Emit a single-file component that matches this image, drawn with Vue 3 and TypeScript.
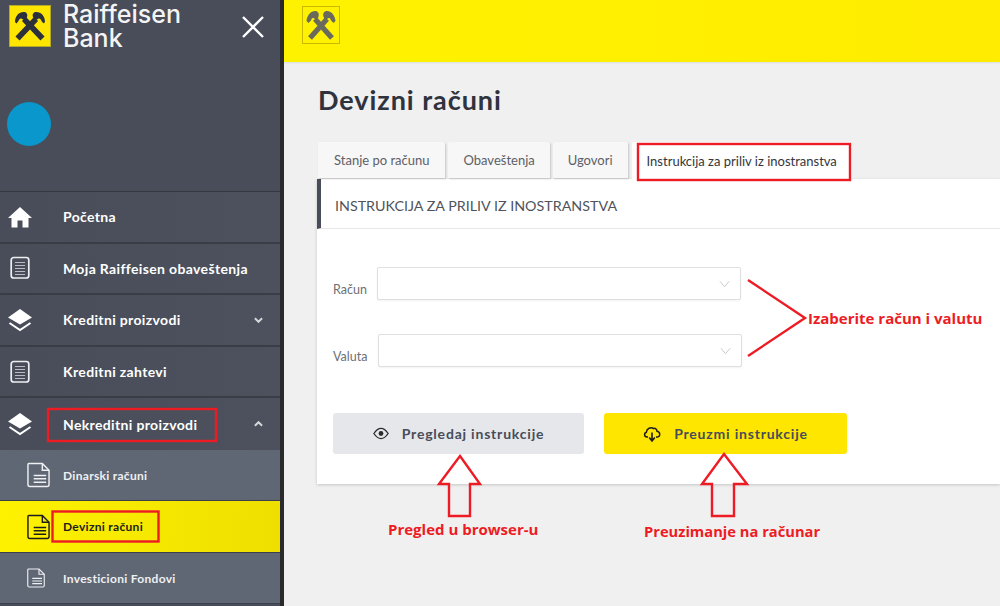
<script setup lang="ts">
type NavIcon = 'home' | 'list' | 'layers'

const mainItems: { label: string; icon: NavIcon; caret?: 'down' }[] = [
  { label: 'Početna', icon: 'home' },
  { label: 'Moja Raiffeisen obaveštenja', icon: 'list' },
  { label: 'Kreditni proizvodi', icon: 'layers', caret: 'down' },
  { label: 'Kreditni zahtevi', icon: 'list' },
]

const subItems = [
  { label: 'Dinarski računi', active: false, small: false },
  { label: 'Devizni računi', active: true, small: false },
  { label: 'Investicioni Fondovi', active: false, small: true },
]

const tabs = ['Stanje po računu', 'Obaveštenja', 'Ugovori']
</script>

<template>
  <div class="page">
    <aside class="sidebar">
      <div class="brand">
        <svg class="logo" viewBox="0 0 42 42">
          <rect x="0.5" y="0.5" width="41" height="41" fill="#ffe600" stroke="#b5a92a" />
          <path d="M8.5 33.5 L27 14 M33.5 33.5 L15 14" stroke="#2b303b" stroke-width="5.6" fill="none" />
          <path d="M6 17 C6 11 10 7 14.5 7 C17.5 7 19 9 18 12 L16 16 L12.5 13.5 C11 13 10 14.5 9.5 16 L7.5 18.5 Z" fill="#2b303b" />
          <path d="M36 17 C36 11 32 7 27.5 7 C24.5 7 23 9 24 12 L26 16 L29.5 13.5 C31 13 32 14.5 32.5 16 L34.5 18.5 Z" fill="#2b303b" />
        </svg>
        <div class="brand-name">Raiffeisen<br />Bank</div>
        <svg class="close" viewBox="0 0 24 24">
          <path d="M2 2 L22 22 M22 2 L2 22" stroke="#fff" stroke-width="2.4" fill="none" />
        </svg>
      </div>

      <div class="user"><span class="avatar"></span></div>

      <nav class="nav">
        <a v-for="item in mainItems" :key="item.label" class="row">
          <span class="icon-cell">
            <svg v-if="item.icon === 'home'" class="ico" viewBox="0 0 24 22">
              <path d="M12 1 L24 12 H20.5 V21.5 H14.5 V14.5 H9.5 V21.5 H3.5 V12 H0 Z" fill="#fff" />
            </svg>
            <svg v-else-if="item.icon === 'list'" class="ico" viewBox="0 0 24 24">
              <rect x="3.2" y="1.5" width="17.6" height="20.5" rx="2.5" fill="none" stroke="#eceef0" stroke-width="1.7" />
              <path d="M7 6.5 H17 M7 9.5 H17 M7 12.5 H17 M7 15.5 H17 M7 18.5 H17" stroke="#b9bcc2" stroke-width="1.1" />
            </svg>
            <svg v-else class="ico" viewBox="0 0 24 24">
              <path d="M12 1 L24 9.5 L12 16.5 L0 9.5 Z" fill="#fff" />
              <path d="M1.5 15 L12 22 L22.5 15" fill="none" stroke="#fff" stroke-width="2" />
            </svg>
          </span>
          <span class="label">{{ item.label }}</span>
          <svg v-if="item.caret" class="caret" viewBox="0 0 10 6">
            <path d="M1 1 L5 5 L9 1" fill="none" stroke="#d5d7da" stroke-width="2.2" />
          </svg>
        </a>

        <a class="row open">
          <span class="icon-cell">
            <svg class="ico" viewBox="0 0 24 24">
              <path d="M12 1 L24 9.5 L12 16.5 L0 9.5 Z" fill="#fff" />
              <path d="M1.5 15 L12 22 L22.5 15" fill="none" stroke="#fff" stroke-width="2" />
            </svg>
          </span>
          <span class="label">Nekreditni proizvodi</span>
          <svg class="caret" viewBox="0 0 10 6">
            <path d="M1 5 L5 1 L9 5" fill="none" stroke="#d5d7da" stroke-width="2.2" />
          </svg>
        </a>

        <a
          v-for="sub in subItems"
          :key="sub.label"
          class="sub"
          :class="{ active: sub.active, small: sub.small }"
        >
          <span class="sub-icon">
            <svg viewBox="0 0 24 26">
              <path d="M2 1 H16 L23 8 V23 Q23 25 21 25 H3 Q1 25 1 23 V2 Q1 1 2 1 Z" fill="none" stroke="currentColor" stroke-width="1.5" />
              <path d="M16 1 V8 H23" fill="none" stroke="currentColor" stroke-width="1.5" />
              <path d="M7 13.5 H20 M7 17 H20 M7 20.5 H20" stroke="currentColor" stroke-width="1.5" />
            </svg>
          </span>
          <span class="sub-label">{{ sub.label }}</span>
        </a>
      </nav>
    </aside>

    <main class="main">
      <header class="topbar">
        <svg class="top-logo" viewBox="0 0 38 38">
          <rect x="0.5" y="0.5" width="37" height="37" fill="none" stroke="#c7ba00" />
          <path d="M8 32 L25 13 M30 32 L13 13" stroke="#6a6a5c" stroke-width="5.2" fill="none" />
          <path d="M4.5 15 C5 9 9 5 13 5 C16 5 17.5 7.5 16.5 10.5 L15 14.5 L11.5 12 C10 11.5 9.5 13 9 14.5 L6.5 17 Z" fill="#6a6a5c" />
          <path d="M33.5 15 C33 9 29 5 25 5 C22 5 20.5 7.5 21.5 10.5 L23 14.5 L26.5 12 C28 11.5 28.5 13 29 14.5 L31.5 17 Z" fill="#6a6a5c" />
        </svg>
      </header>

      <div class="content">
        <h1 class="title">Devizni računi</h1>

        <div class="tabs">
          <button v-for="tab in tabs" :key="tab" class="tab">{{ tab }}</button>
          <button class="tab current">Instrukcija za priliv iz inostranstva</button>
        </div>

        <section class="card">
          <h2 class="card-head">INSTRUKCIJA ZA PRILIV IZ INOSTRANSTVA</h2>
          <div class="card-body">
            <div class="field">
              <label>Račun</label>
              <div class="select">
                <svg viewBox="0 0 12 8"><path d="M1 1 L6 7 L11 1" fill="none" stroke="#c4c6c9" stroke-width="1" /></svg>
              </div>
            </div>
            <div class="field second">
              <label>Valuta</label>
              <div class="select">
                <svg viewBox="0 0 12 8"><path d="M1 1 L6 7 L11 1" fill="none" stroke="#c4c6c9" stroke-width="1" /></svg>
              </div>
            </div>
            <div class="actions">
              <button class="btn grey">
                <svg class="btn-ico" viewBox="0 0 18 14">
                  <path d="M1 7 C4 2.5 6.5 1.2 9 1.2 C11.5 1.2 14 2.5 17 7 C14 11.5 11.5 12.8 9 12.8 C6.5 12.8 4 11.5 1 7 Z" fill="none" stroke="#2c2c2c" stroke-width="1.5" />
                  <circle cx="9" cy="7" r="2.7" fill="#2c2c2c" />
                </svg>
                Pregledaj instrukcije
              </button>
              <button class="btn yellow">
                <svg class="btn-ico cloud" viewBox="0 0 18 18">
                  <path d="M5 12 H4 C1 12 0.8 8 3.4 7.2 C3.6 3.5 8 1.5 10.5 3.6 C12 2.8 14 4 14 6.2 C17.5 6.6 17.8 12 14 12 H13" fill="none" stroke="#1d1d1d" stroke-width="1.5" />
                  <path d="M9 7.5 V15 M6.2 12.6 L9 16 L11.8 12.6" fill="none" stroke="#1d1d1d" stroke-width="1.6" />
                </svg>
                Preuzmi instrukcije
              </button>
            </div>
          </div>
        </section>
      </div>
    </main>

    <!-- crvene oznake preko screenshota -->
    <svg class="marks" viewBox="0 0 1000 606">
      <g fill="none" stroke="#ed1c24">
        <rect x="48" y="409" width="168" height="32" stroke-width="2.4" />
        <rect x="52.5" y="511.5" width="106" height="30" stroke-width="2.4" />
        <rect x="638" y="144" width="212" height="36" stroke-width="2.4" />
        <path d="M748 280 L805 318 L748 356" stroke-width="2.4" />
        <path d="M460 456 L480 484 H470 V516 H449 V484 H439 Z" stroke-width="2.4" />
        <path d="M724 454 L747 484 H734 V516 H712 V484 H702 Z" stroke-width="2.4" />
      </g>
    </svg>
    <span class="note n1">Izaberite račun i valutu</span>
    <span class="note n2">Pregled u browser-u</span>
    <span class="note n3">Preuzimanje na računar</span>
  </div>
</template>

<style>
html,
body {
  margin: 0;
  overflow: hidden;
  background: #f0f0f0;
}
</style>

<style scoped>
.page {
  position: relative;
  display: flex;
  width: 1000px;
  height: 606px;
  overflow: hidden;
  font-family: Lato, "Noto Sans", sans-serif;
}

.sidebar {
  flex: 0 0 280px;
  height: 606px;
  background: #484d59;
  border-right: 4px solid #2a2a2c;
}

.brand {
  display: flex;
  align-items: flex-start;
  height: 62px;
  padding-left: 9px;
}

.logo {
  width: 42px;
  height: 42px;
  margin-top: 5px;
}

.brand-name {
  margin: 3px 0 0 12px;
  color: #f4f4f4;
  font-family: Inter, sans-serif;
  font-size: 25px;
  line-height: 23.5px;
  font-weight: 500;
}

.close {
  width: 24px;
  height: 24px;
  margin: 15px 15px 0 auto;
}

.user {
  height: 129px;
  position: relative;
}

.avatar {
  display: block;
  width: 44px;
  height: 44px;
  margin: 40px 0 0 7px;
  border-radius: 50%;
  background: #0a97cb;
  position: absolute;
}

.nav {
  display: flex;
  flex-direction: column;
  border-top: 1px solid #333740;
}

.row {
  display: flex;
  align-items: center;
  height: 49.6px;
  border-bottom: 2px solid #393d46;
  background: linear-gradient(90deg, #484d59, #4c515d);
  color: #fff;
}

.row.open {
  height: 52px;
  border-bottom: 0;
}

.icon-cell {
  display: flex;
  justify-content: center;
  width: 64px;
  margin-left: -1px;
  padding-right: 22px;
  box-sizing: border-box;
}

.ico {
  width: 24px;
  height: 24px;
}

.label {
  flex: 1;
  font-size: 14px;
  font-weight: 700;
  letter-spacing: 0.35px;
}

.caret {
  width: 9px;
  height: 6px;
  margin-right: 17px;
}

.sub {
  display: flex;
  align-items: center;
  height: 50px;
  background: #5f6674;
  border-bottom: 1px solid #3c404a;
  color: #eef0f2;
}

.sub.active {
  height: 51px;
  background: linear-gradient(95deg, #fff200, #efdf00);
  color: #1d1d1b;
}

.sub-icon {
  display: flex;
  width: 63px;
  padding-left: 27px;
  box-sizing: border-box;
}

.sub-icon svg {
  width: 23px;
  height: 26px;
}

.sub.small .sub-icon svg {
  width: 18px;
  height: 20px;
}

.sub-label {
  font-size: 12px;
  font-weight: 700;
  letter-spacing: 0.3px;
}

.main {
  flex: 1;
  min-width: 0;
}

.topbar {
  display: flex;
  align-items: center;
  height: 62px;
  background: linear-gradient(90deg, #fff200, #ffec00);
  padding-left: 18px;
  box-sizing: border-box;
  box-shadow: 0 1px 2px rgba(0, 0, 0, 0.08);
}

.top-logo {
  width: 38px;
  height: 38px;
  margin-top: -13px;
}

.content {
  padding: 23px 0 0 33px;
}

.title {
  margin: 0 0 27px 1px;
  color: #2f333d;
  font-size: 27px;
  line-height: 30px;
  font-weight: 700;
  letter-spacing: 0.95px;
}

.tabs {
  display: flex;
  gap: 3px;
  height: 37px;
  margin-left: 1px;
}

.tab {
  height: 36px;
  padding: 0 15px;
  border: 0;
  border-radius: 2px 2px 0 0;
  background: #f7f7f7;
  box-shadow: 1px 1px 2px rgba(0, 0, 0, 0.18);
  color: #5d6066;
  font-family: Lato, sans-serif;
  font-size: 13px;
}

.tab:first-child {
  padding: 0 16px;
}

.tab.current {
  height: 37px;
  margin-left: 1px;
  background: #fff;
  box-shadow: none;
  color: #33363c;
}

.card {
  width: 683px;
  height: 305px;
  background: #fff;
  box-shadow: 0 1px 3px rgba(0, 0, 0, 0.18);
}

.card-head {
  height: 50px;
  margin: 0;
  padding-left: 14px;
  border-left: 4px solid #484d59;
  border-bottom: 1px solid #e8e8e8;
  box-sizing: border-box;
  color: #50535b;
  font-size: 14.3px;
  line-height: 53px;
  font-weight: 400;
}

.card-body {
  padding: 38px 0 0 16px;
}

.field {
  display: flex;
  align-items: flex-end;
  gap: 10px;
}

.field.second {
  margin-top: 34px;
  margin-left: 1px;
}

.field label {
  width: 34px;
  padding-bottom: 3px;
  color: #6d7076;
  font-size: 12.5px;
}

.field.second label {
  margin-left: -1px;
  width: 35px;
}

.select {
  display: flex;
  align-items: center;
  justify-content: flex-end;
  width: 364px;
  height: 33px;
  padding-right: 10px;
  box-sizing: border-box;
  border: 1px solid #dfdfdf;
  border-radius: 2px;
  background: #fff;
  box-shadow: 0 1px 2px rgba(0, 0, 0, 0.05);
}

.select svg {
  width: 11px;
  height: 8px;
}

.actions {
  display: flex;
  gap: 20px;
  margin-top: 46px;
}

.btn {
  display: flex;
  align-items: center;
  justify-content: center;
  gap: 13px;
  height: 41px;
  border: 0;
  border-radius: 3px;
  color: #484d59;
  font-family: Lato, sans-serif;
  font-size: 14px;
  font-weight: 700;
  letter-spacing: 0.8px;
}

.btn.grey {
  width: 251px;
  background: #e6e7ea;
}

.btn.yellow {
  width: 243px;
  background: #ffe600;
}

.btn-ico {
  width: 16px;
  height: 13px;
}

.btn-ico.cloud {
  width: 18px;
  height: 18px;
}

.marks {
  position: absolute;
  inset: 0;
  width: 1000px;
  height: 606px;
  pointer-events: none;
}

.note {
  position: absolute;
  color: #ed1c24;
  font-family: "Open Sans", sans-serif;
  font-size: 15px;
  line-height: 18px;
  font-weight: 700;
  white-space: nowrap;
}

.n1 {
  left: 808px;
  top: 309px;
}

.n2 {
  left: 388px;
  top: 520px;
}

.n3 {
  left: 644px;
  top: 522px;
  font-size: 14.7px;
}
</style>
